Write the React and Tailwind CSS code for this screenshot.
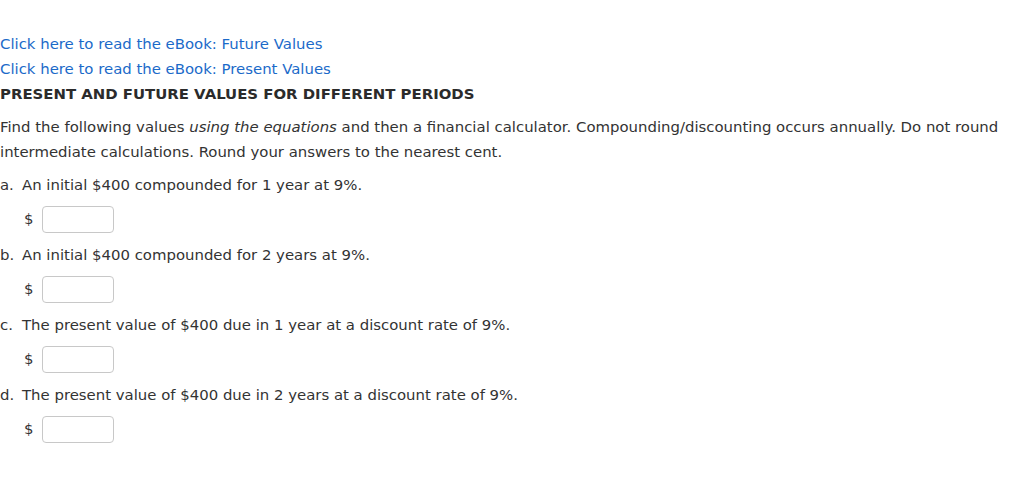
import React from 'react';

const questions = [
  { label: 'a.', text: 'An initial $400 compounded for 1 year at 9%.' },
  { label: 'b.', text: 'An initial $400 compounded for 2 years at 9%.' },
  { label: 'c.', text: 'The present value of $400 due in 1 year at a discount rate of 9%.' },
  { label: 'd.', text: 'The present value of $400 due in 2 years at a discount rate of 9%.' },
];

const App = () => {
  return (
    <div className="w-[1024px] h-[481px] bg-white text-[#333] text-[14.9px] font-['DejaVu_Sans',Verdana,sans-serif] pt-[32px]">
      <div className="leading-[25px]">
        <a href="#" className="block text-[#1b6ac9]">Click here to read the eBook: Future Values</a>
        <a href="#" className="block text-[#1b6ac9]">Click here to read the eBook: Present Values</a>
        <h2 className="font-bold text-[#2b2b2b]">PRESENT AND FUTURE VALUES FOR DIFFERENT PERIODS</h2>
      </div>

      <p className="mt-[8px] leading-[25px]">
        Find the following values <em>using the equations</em> and then a financial calculator. Compounding/discounting occurs annually. Do not round<br />
        intermediate calculations. Round your answers to the nearest cent.
      </p>

      <div className="mt-[8px]">
        {questions.map((q) => (
          <div key={q.label} className="mb-[10px]">
            <div className="flex leading-[25px]">
              <span className="w-[22px] shrink-0">{q.label}</span>
              <span>{q.text}</span>
            </div>
            <div className="flex items-center h-[35px] pl-[24px] pt-[8px]">
              <span className="w-[18px]">$</span>
              <input
                type="text"
                className="w-[72px] h-[27px] border border-[#c8c8c8] rounded-[4px] bg-white outline-none"
              />
            </div>
          </div>
        ))}
      </div>
    </div>
  );
};

export default App;
